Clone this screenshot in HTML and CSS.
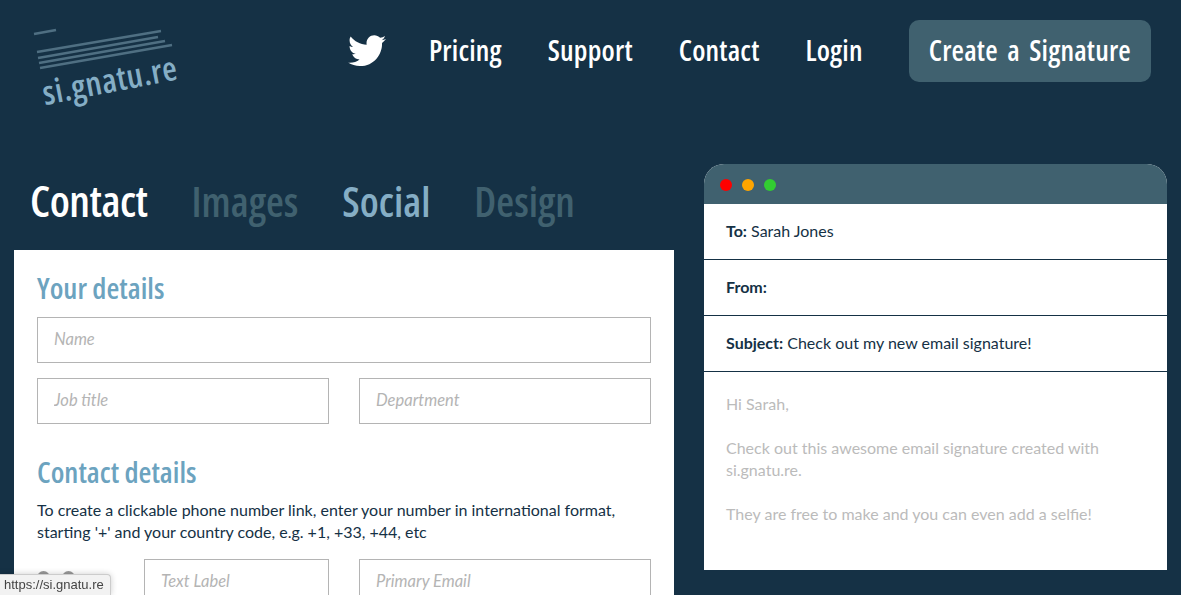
FILE: index.html
```html
<!DOCTYPE html>
<html lang="en">
<head>
  <meta charset="UTF-8" />
  <meta name="viewport" content="width=device-width, initial-scale=1" />
  <title>si.gnatu.re</title>
  <link rel="stylesheet" href="styles.css">
</head>
<body>
  <header class="top">
    <a class="logo" href="#">
      <svg class="logo-lines" width="150" height="50" viewBox="0 0 150 50">
        <g stroke="#4f6f82" stroke-width="2.5" fill="none">
          <path d="M2 14 L24 10" />
          <path d="M5 32 L129 11" />
          <path d="M6 38 L126 17" />
          <path d="M7 43 L133 21" />
          <path d="M8 48 L140 25" />
        </g>
      </svg>
      <span class="logo-text">si.gnatu.re</span>
    </a>
    <nav class="menu">
      <a class="bird" href="#">
        <svg width="38" height="32" viewBox="0 0 24 20">
          <path fill="#fff" d="M24 2.4c-.9.4-1.8.7-2.8.8 1-.6 1.8-1.6 2.2-2.7-1 .6-2 1-3.1 1.2C19.3.7 18 .1 16.6.1c-2.7 0-4.900 2.200-4.900 4.900 0 .4 0 .8.1 1.100C7.700 5.900 4.100 4 1.700.9 1.200 1.600 1 2.500 1 3.400c0 1.700.9 3.200 2.200 4.100-.8 0-1.600-.2-2.200-.6v.1c0 2.400 1.700 4.400 3.900 4.800-.4.100-.8.200-1.300.2-.3 0-.6 0-.9-.1.6 2 2.400 3.400 4.600 3.400-1.700 1.300-3.800 2.100-6.100 2.100-.4 0-.8 0-1.200-.1 2.200 1.400 4.800 2.200 7.500 2.200 9.100 0 14-7.500 14-14v-.6c1-.7 1.800-1.600 2.500-2.500z" />
        </svg>
      </a>
      <a href="#">Pricing</a>
      <a href="#">Support</a>
      <a href="#">Contact</a>
      <a href="#">Login</a>
      <a class="cta" href="#">Create a Signature</a>
    </nav>
  </header>

  <main class="content">
    <section class="builder">
      <div class="tabs">
        <a class="tab active" href="#">Contact</a>
        <a class="tab" href="#">Images</a>
        <a class="tab done" href="#">Social</a>
        <a class="tab" href="#">Design</a>
      </div>
      <form class="panel">
        <h3>Your details</h3>
        <input class="field" type="text" placeholder="Name" />
        <div class="row">
          <input class="field" type="text" placeholder="Job title" />
          <input class="field" type="text" placeholder="Department" />
        </div>
        <h3 class="second">Contact details</h3>
        <p class="hint">To create a clickable phone number link, enter your number in international format, starting '+' and your country code, e.g. +1, +33, +44, etc</p>
        <div class="row contact-row">
          <div class="icon-pick">
            <span></span>
            <span></span>
          </div>
          <input class="field" type="text" placeholder="Text Label" />
          <input class="field" type="text" placeholder="Primary Email" />
        </div>
      </form>
    </section>

    <aside class="mail">
      <div class="mail-bar">
        <span class="dot red"></span>
        <span class="dot orange"></span>
        <span class="dot green"></span>
      </div>
      <div class="mail-line"><b>To:</b> Sarah Jones</div>
      <div class="mail-line"><b>From:</b></div>
      <div class="mail-line"><b>Subject:</b> Check out my new email signature!</div>
      <div class="mail-body">
        <p>Hi Sarah,</p>
        <p>Check out this awesome email signature created with si.gnatu.re.</p>
        <p>They are free to make and you can even add a selfie!</p>
      </div>
    </aside>
  </main>

  <div class="status">https://si.gnatu.re</div>
</body>
</html>
```

FILE: styles.css
```css
html, body {
  height: 595px;
  overflow: hidden;
}
body {
  margin: 0;
  background-color: #153145;
  color: #153145;
  font-family: "Lato", "Open Sans", sans-serif;
  font-size: 16px;
}
a {
  text-decoration: none;
}
.top, .tabs, .panel h3 {
  font-family: "Open Sans", sans-serif;
  font-stretch: 75%;
}
.top {
  display: flex;
  justify-content: space-between;
  height: 164px;
  padding: 20px 30px 0 32px;
  box-sizing: border-box;
}
.logo {
  position: relative;
  display: block;
  width: 150px;
  height: 100px;
}
.logo-lines {
  overflow: visible;
}
.logo-text {
  position: absolute;
  left: 15px;
  top: 49px;
  font-size: 33.5px;
  font-weight: 600;
  letter-spacing: 0.5px;
  color: #85aec5;
  transform: rotate(-11deg);
  transform-origin: left bottom;
}
.menu {
  display: flex;
  align-items: center;
  height: 62px;
  font-size: 28.5px;
  font-weight: 600;
  letter-spacing: 0.2px;
  line-height: 60px;
}
.menu a {
  color: #fff;
  margin: 0 0 2px 46px;
}
.menu .bird {
  display: flex;
  margin: 0 -3px 0 0;
}
.menu .cta {
  margin-bottom: 0;
  padding: 0 20px;
  height: 62px;
  box-sizing: border-box;
  background: #40616f;
  border-radius: 10px;
  word-spacing: 4px;
}
.content {
  display: flex;
  align-items: flex-start;
  padding: 0 14px;
  gap: 30px;
}
.builder {
  width: 660px;
}
.tabs {
  display: flex;
  align-items: baseline;
  gap: 44px;
  height: 86px;
  padding: 12px 0 0 16px;
  box-sizing: border-box;
  font-size: 41px;
  font-weight: 600;
  line-height: 50px;
}
.tab {
  color: #40616f;
}
.tab.active {
  color: #fff;
  font-size: 43.5px;
  letter-spacing: -0.5px;
}
.tab.done {
  color: #85aec5;
}
.panel {
  background: #fff;
  height: 345px;
  padding: 20px 23px 0;
  box-sizing: border-box;
}
.panel h3 {
  margin: 0 0 11px;
  height: 36px;
  font-size: 29.5px;
  line-height: 36px;
  font-weight: 600;
  color: #6ca3bf;
}
.panel h3.second {
  margin: 30px 0 9px;
}
.field {
  display: block;
  width: 100%;
  height: 46px;
  padding: 0 16px 2px;
  box-sizing: border-box;
  border: 1px solid #b4b4b4;
  border-radius: 0;
  font-family: inherit;
  font-size: 16.5px;
  font-style: italic;
}
.field::placeholder {
  color: #b4b4b4;
}
.row {
  display: flex;
  gap: 30px;
  margin-top: 15px;
}
.hint {
  margin: 0 0 16px;
  line-height: 22px;
}
.contact-row {
  margin: 0;
}
.icon-pick {
  display: flex;
  gap: 12px;
  flex: 0 0 77px;
  padding-top: 12px;
  box-sizing: border-box;
}
.icon-pick span {
  width: 13px;
  height: 13px;
  border-radius: 50%;
  background: #999;
}
.contact-row .field:nth-child(2) {
  flex: 0 0 185px;
}
.mail {
  width: 463px;
  height: 406px;
  background: #fff;
  border-radius: 20px 20px 0 0;
  overflow: hidden;
}
.mail-bar {
  display: flex;
  align-items: center;
  gap: 10px;
  height: 40px;
  padding: 2px 0 0 16px;
  box-sizing: border-box;
  background: #40616f;
}
.dot {
  width: 12px;
  height: 12px;
  border-radius: 50%;
}
.red { background: #ff0000; }
.orange { background: #ffa500; }
.green { background: #32cd32; }
.mail-line {
  height: 56px;
  padding: 0 22px;
  line-height: 53px;
  box-sizing: border-box;
  border-bottom: 1px solid #153145;
}
.mail-body {
  padding: 21px 22px 0;
  color: #bbb;
}
.mail-body p {
  margin: 0 0 22px;
  line-height: 22px;
}
.status {
  position: fixed;
  left: 0;
  bottom: 0;
  height: 20px;
  padding: 0 6px 0 4px;
  font-family: "Liberation Sans", sans-serif;
  font-size: 13px;
  line-height: 20px;
  color: #444;
  background: #f2f2f2;
  border: 1px solid #ccc;
  border-left: 0;
  border-bottom: 0;
  border-radius: 0 4px 0 0;
  box-shadow: 0 0 6px rgba(0, 0, 0, 0.2);
}
```
